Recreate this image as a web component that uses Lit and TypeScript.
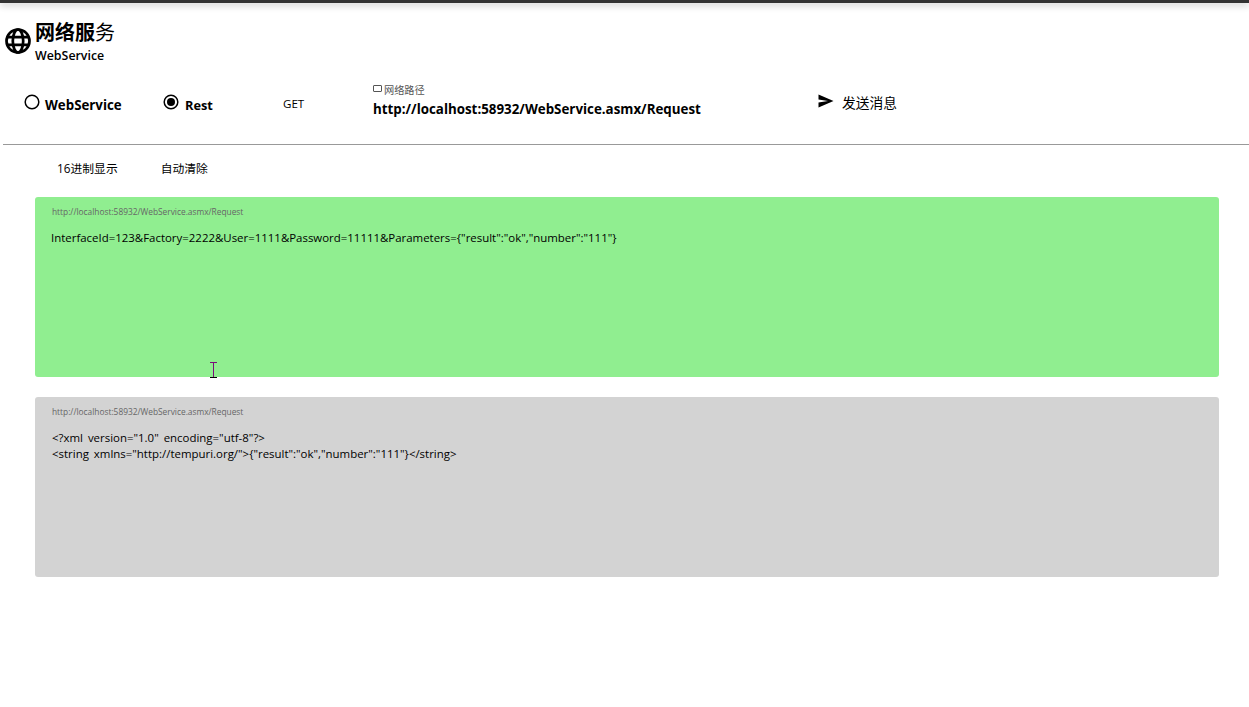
import { LitElement, html, css } from "lit";
import { customElement } from "lit/decorators.js";

const URL_TEXT = "http://localhost:58932/WebService.asmx/Request";

@customElement("app-root")
export class AppRoot extends LitElement {
  static styles = css`
    :host {
      display: block;
      width: 1249px;
      height: 707px;
      overflow: hidden;
      background: #fff;
      color: #000;
      font-family: "Open Sans", "Noto Sans CJK SC", sans-serif;
      font-size: 11.45px;
    }
    * { box-sizing: border-box; }
    .topbar {
      height: 3px;
      background: #333;
      box-shadow: 0 2px 7px rgba(0, 0, 0, 0.3);
    }
    .header {
      display: flex;
      align-items: center;
      height: 61px;
      padding: 18px 0 0 5px;
    }
    .globe { width: 26px; height: 26px; margin: 0 4px 3px 0; flex: none; }
    .title { font-size: 20px; line-height: 27px; }
    .title b { font-weight: 700; }
    .subtitle { font-size: 12.4px; font-weight: 600; line-height: 20px; }
    .controls {
      display: flex;
      align-items: center;
      height: 81px;
      margin-left: 3px;
      border-bottom: 1px solid #999;
    }
    .radio {
      display: flex;
      align-items: center;
      gap: 5px;
      padding-top: 2px;
      font-size: 13.3px;
      font-weight: 700;
    }
    .radio svg { width: 16px; height: 16px; flex: none; margin-top: -7px; }
    .r1 { margin-left: 21px; width: 139px; }
    .r2 { width: 120px; gap: 6px; font-size: 12.8px; }
    .method { width: 90px; font-size: 11.6px; margin-bottom: 1px; }
    .path { width: 445px; display: flex; flex-direction: column; margin-top: -6px; }
    .path-label {
      display: flex;
      align-items: center;
      gap: 2px;
      font-size: 10.2px;
      line-height: 16px;
      color: #555;
    }
    .path-label i {
      width: 9px;
      height: 7px;
      border: 1px solid #555;
      border-radius: 1px;
      margin-top: -3px;
    }
    .path-value { font-size: 13.35px; font-weight: 700; line-height: 22px; }
    .send { display: flex; align-items: center; gap: 8px; font-size: 13.75px; margin-bottom: 5px; }
    .send svg { width: 16px; height: 14px; margin-top: -1px; }
    .options {
      display: flex;
      height: 52px;
      align-items: center;
      padding: 0 0 8px 57px;
      gap: 43px;
      font-size: 11.8px;
    }
    .panels {
      display: flex;
      flex-direction: column;
      gap: 20px;
      padding: 0 30px 0 35px;
    }
    .panel {
      position: relative;
      height: 180px;
      border-radius: 3px;
      padding: 8px 17px;
      line-height: 16px;
    }
    .green { background: #90ee90; }
    .gray { background: #d3d3d3; }
    .gray pre { word-spacing: 2px; }
    .panel-url { font-size: 8.35px; line-height: 14px; color: #666; margin-bottom: 11px; }
    .green pre { margin-left: -1px; }
    pre { margin: 0; font: inherit; white-space: pre; }
    .cursor {
      position: absolute;
      left: 174px;
      top: 165px;
      width: 9px;
      height: 16px;
    }
  `;

  render() {
    return html`
      <div class="topbar"></div>
      <div class="header">
        <svg class="globe" viewBox="0 0 24 24" fill="none" stroke="#000" stroke-width="2.5">
          <circle cx="12" cy="12" r="10.6"></circle>
          <ellipse cx="12" cy="12" rx="4.8" ry="10.6"></ellipse>
          <path d="M2 8.4h20M2 15.6h20"></path>
        </svg>
        <div>
          <div class="title"><b>网络服</b>务</div>
          <div class="subtitle">WebService</div>
        </div>
      </div>
      <div class="controls">
        <div class="radio r1">
          <svg viewBox="0 0 16 16"><circle cx="8" cy="8" r="6.8" fill="none" stroke="#000" stroke-width="1.5"></circle></svg>
          WebService
        </div>
        <div class="radio r2">
          <svg viewBox="0 0 16 16"><circle cx="8" cy="8" r="6.8" fill="none" stroke="#000" stroke-width="1.5"></circle><circle cx="8" cy="8" r="4" fill="#000"></circle></svg>
          Rest
        </div>
        <div class="method">GET</div>
        <div class="path">
          <div class="path-label"><i></i>网络路径</div>
          <div class="path-value">${URL_TEXT}</div>
        </div>
        <div class="send">
          <svg viewBox="0 0 16 14"><path d="M0.5 0.5 15.5 7 0.5 13.5 0.5 8.6 10 7 0.5 5.4Z" fill="#000"></path></svg>
          发送消息
        </div>
      </div>
      <div class="options"><span>16进制显示</span><span>自动清除</span></div>
      <div class="panels">
        <div class="panel green">
          <div class="panel-url">${URL_TEXT}</div>
          <pre>InterfaceId=123&Factory=2222&User=1111&Password=11111&Parameters={"result":"ok","number":"111"}</pre>
          <svg class="cursor" viewBox="0 0 9 16" fill="none" stroke-width="1">
            <path d="M1 .5h7M4.5 .5v15" stroke="#7a0f7a"></path>
            <path d="M1 15.5h7" stroke="#000"></path>
          </svg>
        </div>
        <div class="panel gray">
          <div class="panel-url">${URL_TEXT}</div>
          <pre>&lt;?xml version="1.0" encoding="utf-8"?&gt;
&lt;string xmlns="http://tempuri.org/"&gt;{"result":"ok","number":"111"}&lt;/string&gt;</pre>
        </div>
      </div>
    `;
  }
}
